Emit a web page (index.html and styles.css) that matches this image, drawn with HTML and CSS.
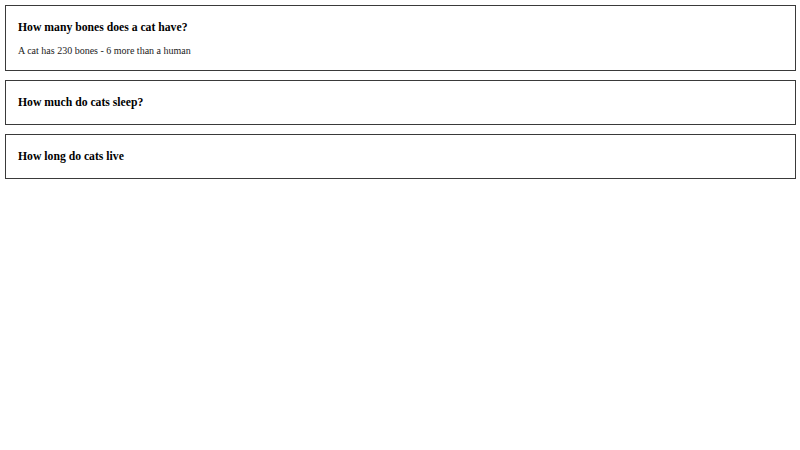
FILE: index.html
```html
<!DOCTYPE html>
<html>
<head>
<meta charset="utf-8">
<link rel="stylesheet" href="styles.css">
</head>
<body>
<div class="faq">
  <div class="item">
    <h3 class="question">How many bones does a cat have?</h3>
    <p class="answer">A cat has 230 bones - 6 more than a human</p>
  </div>
  <div class="item">
    <h3 class="question">How much do cats sleep?</h3>
  </div>
  <div class="item">
    <h3 class="question">How long do cats live</h3>
  </div>
</div>
</body>
</html>
```
FILE: styles.css
```css
html, body {
  margin: 0;
  padding: 0;
  background: #fff;
}
body {
  padding: 5px 4px 5px 5px;
  font-family: "Liberation Serif", "Times New Roman", serif;
  font-size: 10px;
  color: #000;
}
.faq {
  display: flex;
  flex-direction: column;
  gap: 9px;
}
.item {
  border: 1px solid #3a3a3a;
  padding: 12px;
  display: flex;
  flex-direction: column;
  gap: 6px;
}
.question {
  margin: 0;
  font-size: 11.7px;
  line-height: 19px;
  font-weight: bold;
}
.answer {
  margin: 0;
  font-size: 10px;
  line-height: 15px;
  color: #222;
}
```
